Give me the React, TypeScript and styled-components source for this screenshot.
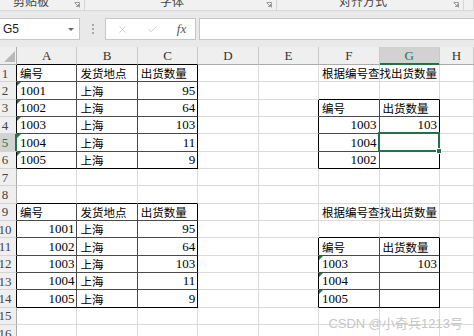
import React from 'react';
import styled, { createGlobalStyle } from 'styled-components';
import { X, Check } from 'lucide-react';

const GREEN = '#217346';
const GRID = '#dadada';
const INNER = '#4a4a4a';
const OUTER = '#000';

const COLS = ['A', 'B', 'C', 'D', 'E', 'F', 'G', 'H'];
const ROW_COUNT = 16;
const ACTIVE = { r: 5, c: 7 };

type Box = { r0: number; r1: number; c0: number; c1: number };

const tables: Box[] = [
  { r0: 1, r1: 6, c0: 1, c1: 3 },
  { r0: 9, r1: 14, c0: 1, c1: 3 },
  { r0: 3, r1: 6, c0: 6, c1: 7 },
  { r0: 11, r1: 14, c0: 6, c1: 7 },
];

// line on the right of cell (r, c); c = 0 is the row header
const rightLine = (r: number, c: number) => {
  for (const t of tables) {
    if (r >= t.r0 && r <= t.r1 && c >= t.c0 - 1 && c <= t.c1) {
      return c === t.c0 - 1 || c === t.c1 ? OUTER : INNER;
    }
  }
  return null;
};

// line under cell (r, c); r = 0 is the column header
const bottomLine = (r: number, c: number) => {
  for (const t of tables) {
    if (c >= t.c0 && c <= t.c1 && r >= t.r0 - 1 && r <= t.r1) {
      return r === t.r0 - 1 || r === t.r1 ? OUTER : INNER;
    }
  }
  return null;
};

type Value = { v: string; right?: boolean; flag?: boolean };

const sheet: Record<string, Value> = {
  A1: { v: '编号' },
  B1: { v: '发货地点' },
  C1: { v: '出货数量' },
  F1: { v: '根据编号查找出货数量' },
  F3: { v: '编号' },
  G3: { v: '出货数量' },
  F4: { v: '1003', right: true },
  G4: { v: '103', right: true },
  F5: { v: '1004', right: true },
  F6: { v: '1002', right: true },
  A9: { v: '编号' },
  B9: { v: '发货地点' },
  C9: { v: '出货数量' },
  F9: { v: '根据编号查找出货数量' },
  F11: { v: '编号' },
  G11: { v: '出货数量' },
  F12: { v: '1003', flag: true },
  G12: { v: '103', right: true },
  F13: { v: '1004', flag: true },
  F14: { v: '1005', flag: true },
};

['95', '64', '103', '11', '9'].forEach((q, i) => {
  sheet[`A${i + 2}`] = { v: `100${i + 1}`, flag: true };
  sheet[`B${i + 2}`] = { v: '上海' };
  sheet[`C${i + 2}`] = { v: q, right: true };
  sheet[`A${i + 10}`] = { v: `100${i + 1}`, right: true };
  sheet[`B${i + 10}`] = { v: '上海' };
  sheet[`C${i + 10}`] = { v: q, right: true };
});

const GlobalStyle = createGlobalStyle`
  html, body {
    margin: 0;
    padding: 0;
    background: #fff;
    overflow: hidden;
  }
  body {
    font-family: "Liberation Sans", "Noto Sans CJK SC", sans-serif;
  }
`;

const Window = styled.div`
  width: 474px;
  height: 336px;
  display: flex;
  flex-direction: column;
  overflow: hidden;
  background: #e9e9e9;
`;

const Ribbon = styled.div`
  height: 10px;
  flex: none;
  display: flex;
  overflow: hidden;
  background: #f1f1f1;
  border-bottom: 1px solid #d6d6d6;
`;

const RibbonGroup = styled.div<{ $w?: number }>`
  flex: ${({ $w }) => ($w ? 'none' : '1')};
  width: ${({ $w }) => ($w ? `${$w}px` : 'auto')};
  display: flex;
  align-items: flex-start;
  border-right: 1px solid #d6d6d6;
`;

const GroupLabel = styled.div<{ $shift: number }>`
  flex: 1;
  margin-top: -7px;
  padding-right: ${({ $shift }) => $shift}px;
  text-align: center;
  font: 12px/16px "Noto Sans CJK SC", sans-serif;
  color: #444;
`;

const LauncherIcon = styled.svg`
  flex: none;
  width: 6px;
  height: 6px;
  margin: 2px 4px 0 0;
`;

const Launcher = () => (
  <LauncherIcon viewBox="0 0 6 6">
    <path d="M0.5 0.5h5v5" fill="none" stroke="#9a9a9a" strokeWidth="1" />
    <path d="M1 1l3.5 3.5M2 4.5h2.5V2" fill="none" stroke="#9a9a9a" strokeWidth="1" />
  </LauncherIcon>
);

const FormulaRow = styled.div`
  flex: none;
  height: 22px;
  padding: 7px 0;
  display: flex;
`;

const NameBox = styled.div`
  width: 81px;
  margin-left: -1px;
  box-sizing: border-box;
  display: flex;
  align-items: center;
  padding-left: 3px;
  background: #fff;
  border: 1px solid #c6c6c6;
  font-size: 12px;
  color: #222;
`;

const Caret = styled.span`
  margin: 1px 5px 0 auto;
  border-left: 3px solid transparent;
  border-right: 3px solid transparent;
  border-top: 3px solid #666;
`;

const Grip = styled.div`
  width: 25px;
  display: flex;
  flex-direction: column;
  align-items: center;
  justify-content: center;
  gap: 2px;

  i {
    width: 2px;
    height: 2px;
    background: #a8a8a8;
  }
`;

const FxBox = styled.div`
  width: 91px;
  box-sizing: border-box;
  display: grid;
  grid-template-columns: 32px 28px 31px;
  align-items: center;
  justify-items: center;
  background: #fff;
  border: 1px solid #c6c6c6;
  color: #b4b4b4;
`;

const Fx = styled.span`
  font: italic 13px "Liberation Serif", serif;
  color: #555;
`;

const FormulaInput = styled.div`
  flex: 1;
  margin: 0 -1px 0 3px;
  background: #fff;
  border: 1px solid #c6c6c6;
`;

const Sheet = styled.div`
  flex: 1;
  position: relative;
  overflow: hidden;
  background: #fff;
  display: grid;
  grid-template-columns: 17px repeat(7, 60.43px) 1fr;
  grid-template-rows: 18px;
  grid-auto-rows: 17.33px;
`;

const Corner = styled.div`
  position: relative;
  background: #efefef;
  border-right: 1px solid #ababab;
  border-bottom: 1px solid #ababab;

  &::after {
    content: '';
    position: absolute;
    right: 1px;
    bottom: 2px;
    border-left: 11px solid transparent;
    border-bottom: 11px solid #b9b9b9;
  }
`;

const ColHead = styled.div<{ $active: boolean; $bottom: string | null }>`
  display: flex;
  align-items: center;
  justify-content: center;
  background: ${({ $active }) => ($active ? '#d2d2d2' : '#efefef')};
  border-right: 1px solid #c9c9c9;
  border-bottom: 1px solid ${({ $active, $bottom }) => ($active ? GREEN : $bottom ?? '#ababab')};
  box-shadow: ${({ $active }) => ($active ? `inset 0 -1px 0 ${GREEN}` : 'none')};
  font: 13px "Liberation Serif", serif;
  color: ${({ $active }) => ($active ? GREEN : '#333')};
`;

const RowHead = styled.div<{ $active: boolean; $right: string | null }>`
  display: flex;
  align-items: center;
  justify-content: center;
  padding-right: 6px;
  padding-top: 1px;
  background: ${({ $active }) => ($active ? '#d2d2d2' : '#efefef')};
  border-right: 1px solid ${({ $active, $right }) => ($active ? GREEN : $right ?? '#ababab')};
  border-bottom: 1px solid #d4d4d4;
  box-shadow: ${({ $active }) => ($active ? `inset -1px 0 0 ${GREEN}` : 'none')};
  font: 13px "Liberation Serif", serif;
  color: ${({ $active }) => ($active ? GREEN : '#444')};
  white-space: nowrap;
`;

const Cell = styled.div<{ $right?: boolean; $flag?: boolean; $rc: string; $bc: string }>`
  position: relative;
  min-width: 0;
  display: flex;
  align-items: flex-end;
  justify-content: ${({ $right }) => ($right ? 'flex-end' : 'flex-start')};
  padding: 0 2px 1px 3px;
  border-right: 1px solid ${({ $rc }) => $rc};
  border-bottom: 1px solid ${({ $bc }) => $bc};
  white-space: nowrap;
  font: 13px/14px "Liberation Serif", "Noto Sans CJK SC", serif;
  color: #000;

  &::before {
    content: '';
    display: ${({ $flag }) => ($flag ? 'block' : 'none')};
    position: absolute;
    top: 0;
    left: 0;
    border-top: 4px solid #1e7b45;
    border-right: 4px solid transparent;
  }
`;

const Han = styled.span`
  font-family: "Noto Sans CJK SC", sans-serif;
  font-size: 11.5px;
`;

const Selection = styled.div`
  position: absolute;
  z-index: 2;
  top: -2px;
  left: -2px;
  right: -1px;
  bottom: -1px;
  border: 2px solid ${GREEN};

  &::after {
    content: '';
    position: absolute;
    right: -4px;
    bottom: -4px;
    width: 4px;
    height: 4px;
    background: ${GREEN};
    border: 1px solid #fff;
  }
`;

const Watermark = styled.div`
  position: absolute;
  right: 11px;
  bottom: 4px;
  z-index: 3;
  font: 13px "Liberation Sans", "Noto Sans CJK SC", sans-serif;
  color: #c6c6c6;
  white-space: nowrap;
`;

const renderText = (v: string) =>
  v.split(/([\u4e00-\u9fff]+)/).map((part, i) =>
    i % 2 ? <Han key={i}>{part}</Han> : part ? <span key={i}>{part}</span> : null,
  );

export default function App() {
  const rows = Array.from({ length: ROW_COUNT }, (_, i) => i + 1);

  return (
    <>
      <GlobalStyle />
      <Window>
        <Ribbon>
          <RibbonGroup $w={84}>
            <GroupLabel $shift={12}>剪贴板</GroupLabel>
            <Launcher />
          </RibbonGroup>
          <RibbonGroup $w={191}>
            <GroupLabel $shift={7}>字体</GroupLabel>
            <Launcher />
          </RibbonGroup>
          <RibbonGroup $w={186}>
            <GroupLabel $shift={4}>对齐方式</GroupLabel>
            <Launcher />
          </RibbonGroup>
          <RibbonGroup />
        </Ribbon>

        <FormulaRow>
          <NameBox>
            G5
            <Caret />
          </NameBox>
          <Grip>
            <i />
            <i />
            <i />
          </Grip>
          <FxBox>
            <X size={11} strokeWidth={1.4} />
            <Check size={11} strokeWidth={1.4} />
            <Fx>fx</Fx>
          </FxBox>
          <FormulaInput />
        </FormulaRow>

        <Sheet>
          <Corner />
          {COLS.map((col, ci) => (
            <ColHead key={col} $active={ci + 1 === ACTIVE.c} $bottom={bottomLine(0, ci + 1)}>
              {col}
            </ColHead>
          ))}
          {rows.map((r) => (
            <React.Fragment key={r}>
              <RowHead $active={r === ACTIVE.r} $right={rightLine(r, 0)}>
                {r}
              </RowHead>
              {COLS.map((col, ci) => {
                const c = ci + 1;
                const cell = sheet[`${col}${r}`];
                return (
                  <Cell
                    key={col}
                    $right={cell?.right}
                    $flag={cell?.flag}
                    $rc={rightLine(r, c) ?? GRID}
                    $bc={bottomLine(r, c) ?? GRID}
                  >
                    {cell && renderText(cell.v)}
                    {r === ACTIVE.r && c === ACTIVE.c && <Selection />}
                  </Cell>
                );
              })}
            </React.Fragment>
          ))}
          <Watermark>CSDN @小奇兵1213号</Watermark>
        </Sheet>
      </Window>
    </>
  );
}
